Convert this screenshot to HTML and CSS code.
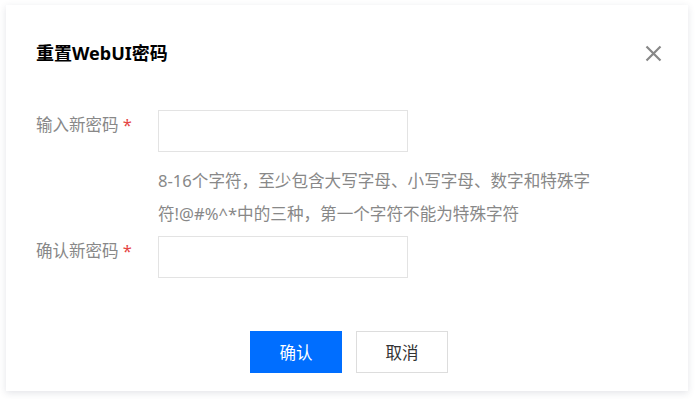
FILE: index.html
```html
<!DOCTYPE html>
<html lang="zh-CN">
<head>
<meta charset="utf-8">
<title>重置WebUI密码</title>
<link rel="stylesheet" href="styles.css">
</head>
<body>
<div class="dialog">
  <div class="dialog-header">
    <h2 class="dialog-title">重置WebUI密码</h2>
    <button class="close-btn" type="button" aria-label="关闭">
      <svg width="17" height="17" viewBox="0 0 17 17"><path d="M1.5 1.5 L15.5 15.5 M15.5 1.5 L1.5 15.5" stroke="#888" stroke-width="2.2" fill="none"/></svg>
    </button>
  </div>
  <div class="form">
    <div class="form-row">
      <label class="form-label">输入新密码 <span class="req">*</span></label>
      <input class="form-input" type="password">
    </div>
    <div class="form-hint">
      <div class="hint-line">8-16个字符，至少包含大写字母、小写字母、数字和特殊字</div>
      <div class="hint-line">符!@#%^*中的三种，第一个字符不能为特殊字符</div>
    </div>
    <div class="form-row row-confirm">
      <label class="form-label">确认新密码 <span class="req">*</span></label>
      <input class="form-input" type="password">
    </div>
  </div>
  <div class="dialog-footer">
    <button class="btn btn-primary" type="button">确认</button>
    <button class="btn btn-default" type="button">取消</button>
  </div>
</div>
</body>
</html>
```
FILE: styles.css
```css
html, body {
  margin: 0;
  padding: 0;
  background: #fff;
}
body {
  font-family: "Noto Sans", "Noto Sans CJK SC", sans-serif;
  width: 700px;
  height: 399px;
  overflow: hidden;
}
.dialog {
  width: 682px;
  height: 386px;
  margin: 5px 0 0 6px;
  background: #fff;
  box-sizing: border-box;
  padding: 30px 26px 0 30px;
  box-shadow: 0 2px 7px rgba(40, 50, 80, 0.13);
  display: flex;
  flex-direction: column;
}
.dialog-header {
  display: flex;
  align-items: center;
  justify-content: space-between;
  height: 36px;
}
.dialog-title {
  margin: 0;
  font-size: 18px;
  font-weight: bold;
  color: #000;
  line-height: 36px;
}
.close-btn {
  border: 0;
  background: none;
  padding: 0;
  width: 17px;
  height: 17px;
  display: flex;
}
.form {
  margin-top: 39px;
}
.form-row {
  display: flex;
  align-items: flex-start;
}
.form-label {
  width: 122px;
  font-size: 16.5px;
  line-height: 30px;
  color: #888;
}
.req {
  color: #e54545;
}
.form-input {
  width: 250px;
  height: 42px;
  box-sizing: border-box;
  border: 1px solid #e3e3e3;
  margin: 0;
  padding: 0 10px;
  outline: none;
  background: #fff;
}
.form-hint {
  margin: 12px 0 0 122px;
  font-size: 16.6px;
  line-height: 33px;
  color: #888;
  white-space: nowrap;
}
.row-confirm {
  margin-top: 6px;
}
.dialog-footer {
  margin-top: 53px;
  display: flex;
  justify-content: center;
  gap: 14px;
}
.btn {
  width: 92px;
  height: 42px;
  box-sizing: border-box;
  font-family: inherit;
  font-size: 16.5px;
  padding: 0;
  cursor: pointer;
}
.btn-primary {
  background: #006eff;
  border: 1px solid #006eff;
  color: #fff;
}
.btn-default {
  background: #fff;
  border: 1px solid #dddddd;
  color: #333;
}
```
